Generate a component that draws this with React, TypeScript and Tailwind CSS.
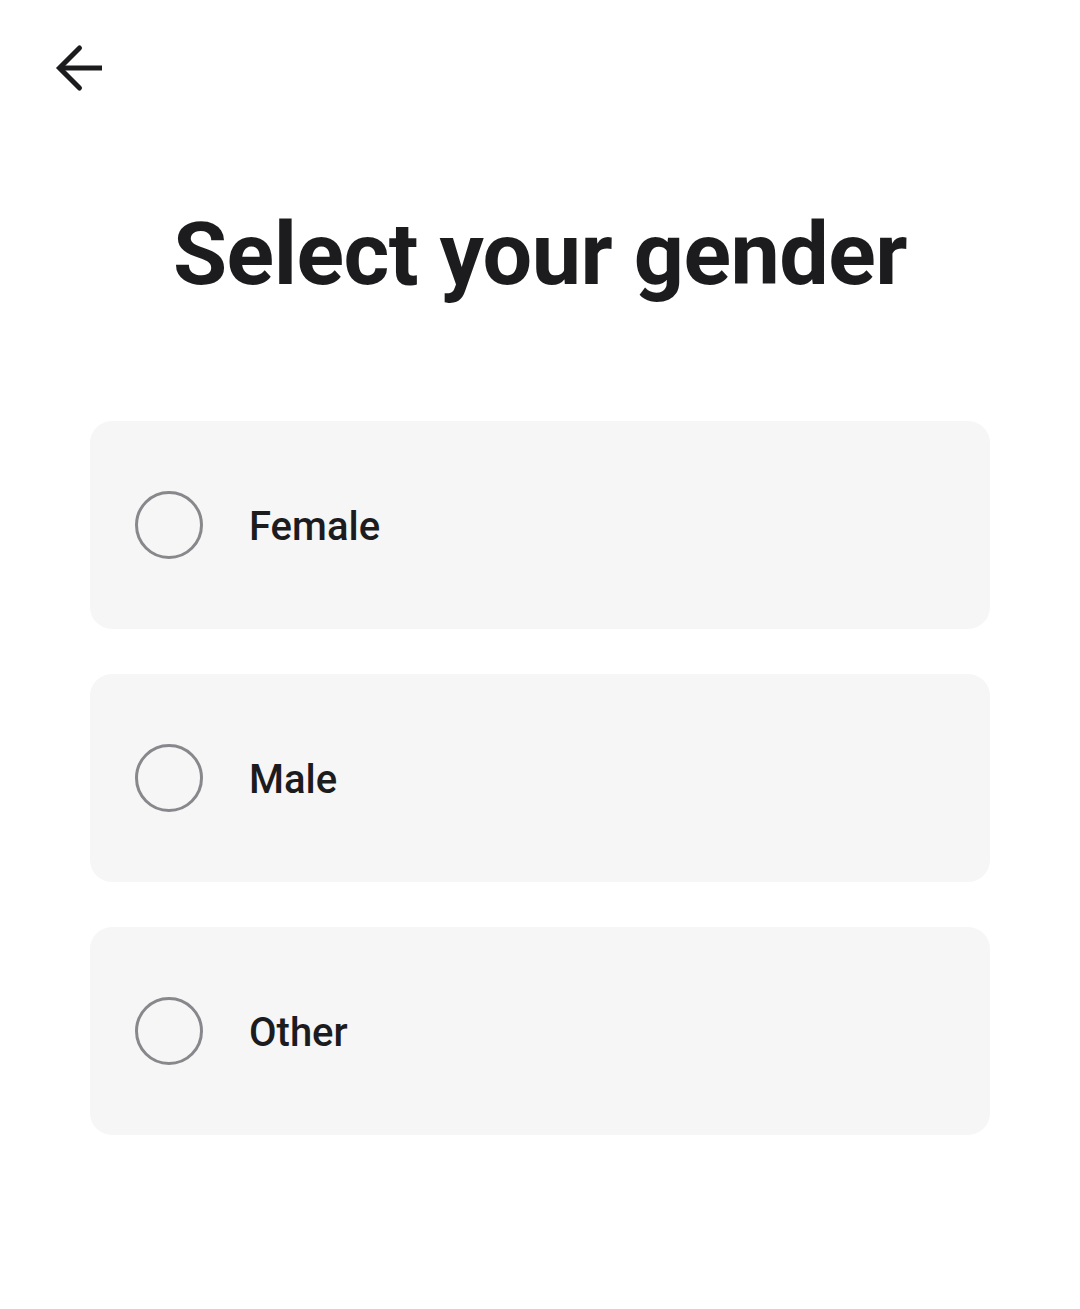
const options = ["Female", "Male", "Other"];

const BackArrow = () => (
	<svg width="56" height="56" viewBox="0 0 56 56" fill="none">
		<path d="M8 24h43" stroke="#1c1c1e" strokeWidth="5" />
		<path
			d="M28.5 4 8.5 24l20 20"
			stroke="#1c1c1e"
			strokeWidth="5"
			strokeLinecap="round"
			strokeLinejoin="miter"
		/>
	</svg>
);

export default function App() {
	return (
		<div className="w-[1080px] h-[1309px] bg-white font-['Roboto',sans-serif]">
			<div className="pt-[44px] pl-[51px]">
				<button type="button" className="block">
					<BackArrow />
				</button>
			</div>
			<h1 className="mt-[104px] text-center text-[88px] leading-[100px] font-bold text-[#1c1c1e] tracking-[-0.5px]">
				Select your gender
			</h1>
			<div className="mt-[117px] px-[90px] flex flex-col gap-[45px]">
				{options.map((option) => (
					<label
						key={option}
						className="h-[208px] bg-[#f6f6f6] rounded-[22px] flex items-center pl-[135px] relative cursor-pointer"
					>
						<span className="absolute left-[45px] w-[68px] h-[68px] rounded-full border-[3px] border-[#88888c]" />
						<span className="pl-[24px] pt-[4px] text-[40px] font-medium text-[#1c1c1e]">
							{option}
						</span>
					</label>
				))}
			</div>
		</div>
	);
}
